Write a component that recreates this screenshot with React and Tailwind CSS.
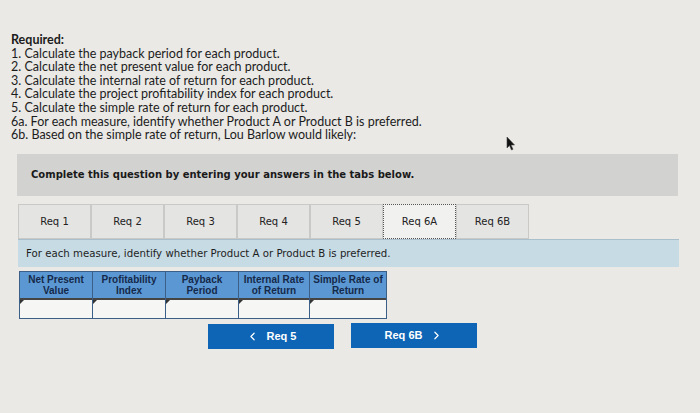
import React from "react";
import { ChevronLeft, ChevronRight } from "lucide-react";

const required = [
  "1. Calculate the payback period for each product.",
  "2. Calculate the net present value for each product.",
  "3. Calculate the internal rate of return for each product.",
  "4. Calculate the project profitability index for each product.",
  "5. Calculate the simple rate of return for each product.",
  "6a. For each measure, identify whether Product A or Product B is preferred.",
  "6b. Based on the simple rate of return, Lou Barlow would likely:",
];

const tabs = ["Req 1", "Req 2", "Req 3", "Req 4", "Req 5", "Req 6A", "Req 6B"];

const columns = [
  { w: "w-[73px]", label: ["Net Present", "Value"] },
  { w: "w-[73px]", label: ["Profitability", "Index"] },
  { w: "w-[73px]", label: ["Payback", "Period"] },
  { w: "w-[71px]", label: ["Internal Rate", "of Return"] },
  { w: "w-[76px]", label: ["Simple Rate of", "Return"] },
];

function Cursor() {
  return (
    <svg className="absolute left-[506px] top-[136px]" width="10" height="15" viewBox="0 0 10 15">
      <path d="M1 1 L1 12 L3.5 9.5 L5.5 14 L7 13.3 L5 9 L8.5 9 Z" fill="#111" stroke="#444" strokeWidth="0.6" />
    </svg>
  );
}

export default function App() {
  return (
    <div className="relative h-[413px] w-[700px] overflow-hidden bg-[#eae9e6]">
      <Cursor />
      <div className="pl-[11px] pt-[33px] text-[12.5px] leading-[13.6px] text-[#1c1c1c]" style={{ fontFamily: "Lato, 'Open Sans', sans-serif" }}>
        <p className="font-bold">Required:</p>
        {required.map((line) => (
          <p key={line}>{line}</p>
        ))}
      </div>

      <div className="ml-[17px] mt-[12px] flex h-[42px] w-[661px] items-center bg-[#d2d2d0] pl-[14px]">
        <p className="text-[10px] font-bold text-[#1a1a1a]" style={{ fontFamily: "'DejaVu Sans', Verdana, sans-serif" }}>
          Complete this question by entering your answers in the tabs below.
        </p>
      </div>

      <div className="ml-[18px] mt-[8px] flex" style={{ fontFamily: "'DejaVu Sans', Verdana, sans-serif" }}>
        {tabs.map((t) => (
          <div
            key={t}
            className={
              t === "Req 6A"
                ? "flex h-[35px] w-[73px] items-center justify-center border border-dotted border-[#555] bg-[#f1f1ef] text-[10px] text-[#222]"
                : "flex h-[35px] w-[73px] items-center justify-center border border-[#c9c9c7] bg-[#e4e4e2] text-[10px] text-[#222]"
            }
          >
            {t}
          </div>
        ))}
      </div>

      <div className="ml-[18px] flex h-[28px] w-[661px] items-center border-t border-[#a9bfcc] bg-[#c7dbe5] pl-[8px]">
        <p className="text-[10.2px] text-[#1e1e1e]" style={{ fontFamily: "'DejaVu Sans', Verdana, sans-serif" }}>
          For each measure, identify whether Product A or Product B is preferred.
        </p>
      </div>

      <div className="ml-[19px] mt-[4px] flex w-fit border border-[#3b5f86]" style={{ fontFamily: "'Liberation Sans', Arial, sans-serif" }}>
        {columns.map((c, i) => (
          <div key={i} className={`${c.w} flex flex-col border-r border-[#3b5f86] last:border-r-0`}>
            <div className="flex h-[26px] flex-col items-center justify-center bg-[#5b98d3] text-[10px] font-bold leading-[11px] text-[#15294a]">
              <span>{c.label[0]}</span>
              <span>{c.label[1]}</span>
            </div>
            <div className="relative h-[20px] border-t-2 border-[#444] bg-[#f6f6f5]">
              <span className="absolute left-0 top-0 h-0 w-0 border-l-[4px] border-b-[4px] border-l-[#333] border-b-transparent" />
            </div>
          </div>
        ))}
      </div>

      <div className="ml-[208px] mt-[5px] flex gap-[17px]" style={{ fontFamily: "'Liberation Sans', Arial, sans-serif" }}>
        <div className="flex h-[25px] w-[126px] items-center justify-center gap-[8px] bg-[#0e65b5] text-[11px] font-bold text-white">
          <ChevronLeft size={13} strokeWidth={2.2} />
          <span>Req 5</span>
        </div>
        <div className="-mt-[1px] flex h-[25px] w-[126px] items-center justify-center gap-[8px] bg-[#0e65b5] text-[11px] font-bold text-white">
          <span>Req 6B</span>
          <ChevronRight size={13} strokeWidth={2.2} />
        </div>
      </div>
    </div>
  );
}
